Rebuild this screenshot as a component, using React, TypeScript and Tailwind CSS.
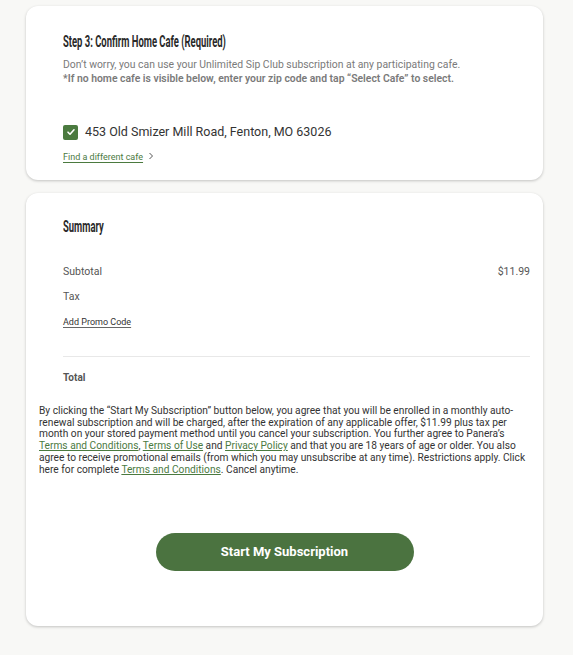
import React from "react";

const sans = "font-['Roboto','Liberation_Sans',sans-serif]";

// condensed display heading (no narrow face installed, so squeeze Roboto bold)
function Heading({ children }: { children: React.ReactNode }) {
  return (
    <h2 className="h-[20px] text-[16px] font-bold leading-[20px] text-[#2a2a2a]">
      <span className="inline-block origin-left scale-x-[0.59] whitespace-nowrap">{children}</span>
    </h2>
  );
}

function Chevron() {
  return (
    <svg width="6" height="8" viewBox="0 0 6 8" className="ml-[5px] mb-[3px] inline-block">
      <path d="M1.5 1l3 3-3 3" fill="none" stroke="#555" strokeWidth="1" />
    </svg>
  );
}

export default function App() {
  return (
    <div className={`min-h-[655px] bg-[#f8f8f6] pt-[6px] pb-[28px] ${sans}`}>
      {/* Step 3 card */}
      <div className="ml-[26px] w-[517px] rounded-[12px] bg-white pl-[37px] pr-[20px] pt-[26px] pb-[16px] shadow-[0_1px_3px_rgba(0,0,0,0.22)]">
        <Heading>Step 3: Confirm Home Cafe (Required)</Heading>
        <p className="mt-[6px] text-[10.4px] leading-[14px] text-[#7a7a7a]">
          Don’t worry, you can use your Unlimited Sip Club subscription at any participating cafe.
        </p>
        <p className="text-[10.4px] font-semibold leading-[14px] text-[#7a7a7a]">
          *If no home cafe is visible below, enter your zip code and tap “Select Cafe” to select.
        </p>
        <div className="mt-[37px] flex items-center gap-[7px]">
          <span className="flex h-[15px] w-[15px] items-center justify-center rounded-[2px] bg-[#4b7a3f]">
            <svg width="10" height="10" viewBox="0 0 10 10">
              <path d="M2 5.2l2 2 4-4.4" fill="none" stroke="white" strokeWidth="1.6" strokeLinecap="round" strokeLinejoin="round" />
            </svg>
          </span>
          <span className="text-[12.5px] leading-[18px] text-[#333]">453 Old Smizer Mill Road, Fenton, MO 63026</span>
        </div>
        <div className="mt-[9px] flex items-center">
          <a className="text-[9px] leading-[14px] text-[#4b7a3f] underline underline-offset-2">Find a different cafe </a>
          <Chevron />
        </div>
      </div>

      {/* Summary card */}
      <div className="ml-[26px] mt-[13px] w-[517px] rounded-[12px] bg-white px-[13px] pt-[24px] pb-[55px] shadow-[0_1px_3px_rgba(0,0,0,0.22)]">
        <div className="pl-[24px]">
          <Heading>Summary</Heading>
          <div className="mt-[28px] flex items-center justify-between text-[10.5px] leading-[14px] text-[#555]">
            <span>Subtotal</span>
            <span>$11.99</span>
          </div>
          <div className="mt-[11px] text-[10.5px] leading-[14px] text-[#555]">Tax</div>
          <div className="mt-[4px]">
            <a className="text-[9px] leading-[14px] text-[#333] underline underline-offset-2 decoration-[#666]">Add Promo Code</a>
          </div>
          <div className="mt-[24px] h-px bg-[#e8e8e8]" />
          <div className="mt-[14px] text-[10px] font-bold leading-[14px] text-[#555]">Total</div>
        </div>
        <p className="mt-[20px] text-[10.2px] leading-[11.7px] text-[#333]">
          By clicking the “Start My Subscription” button below, you agree that you will be enrolled in a monthly auto-renewal
          subscription and will be charged, after the expiration of any applicable offer, $11.99 plus tax per month on your
          stored payment method until you cancel your subscription. You further agree to Panera’s{" "}
          <a className="text-[#4b7a3f] underline">Terms and Conditions</a>,{" "}
          <a className="text-[#4b7a3f] underline">Terms of Use</a> and{" "}
          <a className="text-[#4b7a3f] underline">Privacy Policy</a> and that you are 18 years of age or older. You also agree
          to receive promotional emails (from which you may unsubscribe at any time). Restrictions apply. Click here for
          complete <a className="text-[#4b7a3f] underline">Terms and Conditions</a>. Cancel anytime.
        </p>
        <div className="mt-[58px] flex justify-center">
          <button className="h-[38px] w-[258px] rounded-full bg-[#4b7340] text-[13px] font-bold text-white">
            Start My Subscription
          </button>
        </div>
      </div>
    </div>
  );
}
